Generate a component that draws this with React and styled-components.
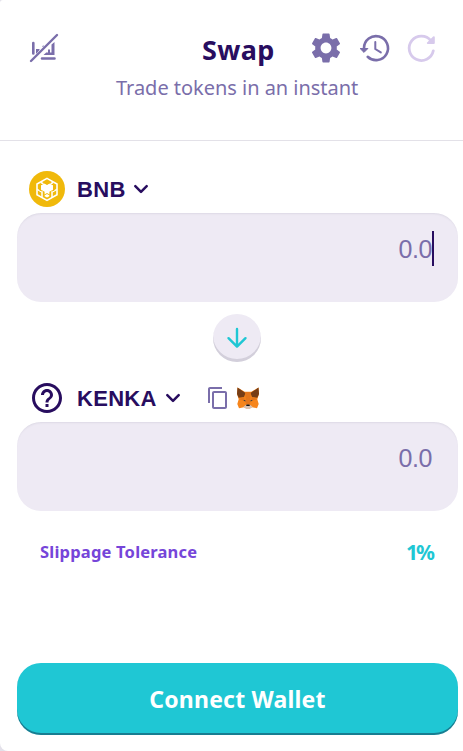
import { MdContentCopy, MdHelpOutline, MdSettings } from 'react-icons/md';
import styled, { createGlobalStyle } from 'styled-components';

const GlobalStyle = createGlobalStyle`
  * {
    box-sizing: border-box;
  }
  body {
    margin: 0;
    background: #e3e1ea;
    font-family: 'Noto Sans', sans-serif;
  }
  svg {
    display: block;
    flex-shrink: 0;
  }
`;

const Card = styled.main`
  width: 463px;
  height: 751px;
  background: #fff;
  border-radius: 3px 0 0 8px;
  overflow: hidden;
`;

const Header = styled.header`
  height: 141px;
  padding: 28px 25px 0 27px;
  border-bottom: 1px solid #e3e1e8;
`;

const TitleRow = styled.div`
  display: grid;
  grid-template-columns: 175px 1fr auto;
  align-items: center;
  height: 40px;
`;

const Title = styled.h2`
  margin: 4px 0 0;
  color: #280d5f;
  font-size: 27px;
  font-weight: 700;
  line-height: 36px;
  letter-spacing: 0.4px;
`;

const Actions = styled.div`
  display: flex;
  align-items: center;
  gap: 15px;
  color: #7a6eaa;
`;

const Subtitle = styled.p`
  margin: 7px 0 0 89px;
  color: #7a6eaa;
  font-size: 20px;
  line-height: 26px;
  letter-spacing: -0.03px;
  white-space: nowrap;
`;

const Body = styled.div`
  display: flex;
  flex-direction: column;
  padding: 24px 5px 0 17px;
`;

const TokenRow = styled.div`
  display: flex;
  align-items: center;
  height: 48px;
  padding-left: 12px;
  color: #280d5f;
`;

const TokenName = styled.span`
  width: ${({ $width }) => $width}px;
  margin: 1px 7px 0 12px;
  font-family: 'Liberation Sans', sans-serif;
  font-size: 22px;
  font-weight: 700;
  line-height: 28px;
  letter-spacing: 0.3px;
  white-space: nowrap;
`;

const TokenLinks = styled.div`
  display: flex;
  align-items: center;
  gap: 6px;
  margin-left: 24px;
  color: #7a6eaa;
`;

const AmountBox = styled.div`
  display: flex;
  justify-content: flex-end;
  align-items: flex-start;
  height: 89px;
  padding: 18px 24px 0;
  border-radius: 24px;
  background: #eeeaf4;
  box-shadow: inset 0 2px 2px -1px rgba(74, 74, 104, 0.1);
`;

const Amount = styled.span`
  height: 35px;
  color: #7a6eaa;
  font-family: 'Liberation Sans', sans-serif;
  font-size: 25px;
  line-height: 37px;
  letter-spacing: -0.4px;
  border-right: 2px solid ${({ $focused }) => ($focused ? '#280d5f' : 'transparent')};
`;

const SwitchButton = styled.button`
  display: flex;
  align-items: center;
  justify-content: center;
  align-self: center;
  width: 48px;
  height: 48px;
  margin: 12px 1px 12px 0;
  padding: 0;
  border: 0;
  border-radius: 50%;
  color: #1fc7d4;
  background: #eeeaf4;
  box-shadow: inset 0 -3px 0 rgba(14, 14, 44, 0.12);
`;

const SlippageRow = styled.div`
  display: flex;
  align-items: center;
  justify-content: space-between;
  height: 36px;
  margin-top: 23px;
  padding: 0 24px 0 23px;
  font-weight: 700;
`;

const SlippageLabel = styled.span`
  margin-bottom: 1px;
  color: #7645d9;
  font-size: 16.5px;
  letter-spacing: 0.2px;
`;

const SlippageValue = styled.span`
  margin-right: 1px;
  color: #1fc7d4;
  font-size: 21px;
  letter-spacing: -2px;
`;

const ConnectButton = styled.button`
  height: 72px;
  margin-top: 93px;
  padding: 0;
  border: 0;
  border-radius: 24px;
  color: #fff;
  background: #1fc7d4;
  box-shadow: inset 0 -2px 0 rgba(14, 14, 44, 0.4);
  font-family: 'Noto Sans', sans-serif;
  font-size: 23px;
  font-weight: 700;
  letter-spacing: 0.2px;
`;

const ChartOffIcon = () => (
  <svg width="34" height="34" viewBox="0 1.5 34 34">
    <path
      d="M6.3 13.5v10.5M15 29h12.5"
      fill="none"
      stroke="#7a6eaa"
      strokeWidth="2.6"
      strokeLinecap="round"
    />
    <path d="M9 19.5h3.5v1L9.5 24H9zM15 17l1.5-1.5v2zM16.5 25.5l3-2.8v.3h1.5v-3h2V23h1.5v-8l3-2.5v13z" fill="#7a6eaa" />
    <path d="M4 31.5 30 5.5" fill="none" stroke="#7a6eaa" strokeWidth="2.4" strokeLinecap="round" />
  </svg>
);

const HistoryIcon = () => (
  <svg width="32" height="32" viewBox="0.7 0 32 32" fill="none" stroke="currentColor">
    <path d="M5.7 17V16a12 12 0 1 1 3.7 8.8" strokeWidth="2.6" strokeLinecap="round" />
    <path d="M1.8 16.5h7.8l-3.9 3.9z" fill="currentColor" strokeWidth="1" strokeLinejoin="round" />
    <path d="M17 10v7l5.5 3.4" strokeWidth="2" strokeLinecap="round" />
  </svg>
);

const RefreshIcon = () => (
  <svg width="32" height="32" viewBox="0 0 32 32" fill="none" stroke="#d7caec" strokeLinecap="round" strokeLinejoin="round">
    <path d="M27.3 18.8A12.2 12.2 0 1 1 25 8.8" strokeWidth="2.8" />
    <path d="M27.8 5.2v5.9h-6z" fill="#d7caec" strokeWidth="2" />
  </svg>
);

const BnbIcon = () => (
  <svg width="36" height="36" viewBox="0 0 36 36" fill="none">
    <circle cx="18" cy="18" r="18" fill="#f0b90b" />
    <path d="M18 7.4 28 13v10.8L18 29.4 8 23.8V13z" stroke="#fff" strokeWidth="1.6" />
    <path d="m12 11.5 6 3.3 6-3.3M8.3 18.4l4.7 2.6v5.4M27.7 18.4 23 21v5.4" stroke="#fff" strokeWidth="1.5" />
    <path d="m12 14.3 3-1.4 3 1.6 3-1.6 3 1.4v4.4l-3.6 2.1v4.4L18 26.6l-2.4-1.4v-4.4L12 18.7z" fill="#fff" />
    <path
      d="m14.5 12.3 3.5-1.8 3.5 1.8M10.3 14.5v4.3l2.2 1.3M25.7 14.5v4.3l-2.2 1.3M14.5 22v2.5l3.5-2 3.5 2V22"
      stroke="#f0b90b"
      strokeWidth="1"
    />
  </svg>
);

const ChevronIcon = () => (
  <svg width="18" height="18" viewBox="0 0 18 18" fill="none" stroke="currentColor">
    <path d="m3.3 6.2 5.7 5.7 5.7-5.7" strokeWidth="2.5" strokeLinecap="round" strokeLinejoin="round" />
  </svg>
);

const ArrowDownIcon = () => (
  <svg width="24" height="24" viewBox="0 0 24 24" fill="none" stroke="currentColor">
    <path d="M12 3v17.5M3.5 12.2l8.5 8.5 8.5-8.5" strokeWidth="2.4" strokeLinecap="round" strokeLinejoin="round" />
  </svg>
);

const FoxIcon = () => (
  <svg width="24" height="24" viewBox="0 0 24 24">
    <path d="m1.5 1.5 7.2 4.3h6.6l7.2-4.3L23 8l-1.7 5.2 1.4 4.7-1.7 4.3-5-1-2.2 1.3h-3.6L8 21.2l-5 1-1.7-4.3 1.4-4.7L1 8z" fill="#f6851b" />
    <path d="m1.5 1.5 8 5.6L8 11l-5.3.8L1 8zM22.5 1.5l-8 5.6L16 11l5.3.8L23 8z" fill="#763d16" />
    <path d="m9.2 6 .7 12h4.2l.7-12zM2.7 13.2 8 11l1.3 4.3zM21.3 13.2 16 11l-1.3 4.3z" fill="#e4761b" />
    <path d="m7.2 14.4 2-.5.3 1.5zM16.8 14.4l-2-.5-.3 1.5z" fill="#233447" />
    <path d="m7.5 20.5 2.8-1.7h3.4l2.8 1.7-2.5 2.3h-4z" fill="#d7c1b3" />
    <path d="M10.5 18.5h3l.3 1.4h-3.6z" fill="#161616" />
  </svg>
);

export default function App() {
  return (
    <>
      <GlobalStyle />
      <Card>
        <Header>
          <TitleRow>
            <ChartOffIcon />
            <Title>Swap</Title>
            <Actions>
              <MdSettings size={36} />
              <HistoryIcon />
              <RefreshIcon />
            </Actions>
          </TitleRow>
          <Subtitle>Trade tokens in an instant</Subtitle>
        </Header>
        <Body>
          <TokenRow>
            <BnbIcon />
            <TokenName $width={48}>BNB</TokenName>
            <ChevronIcon />
          </TokenRow>
          <AmountBox>
            <Amount $focused>0.0</Amount>
          </AmountBox>
          <SwitchButton aria-label="Switch tokens">
            <ArrowDownIcon />
          </SwitchButton>
          <TokenRow>
            <MdHelpOutline size={36} />
            <TokenName $width={80}>KENKA</TokenName>
            <ChevronIcon />
            <TokenLinks>
              <MdContentCopy size={24} />
              <FoxIcon />
            </TokenLinks>
          </TokenRow>
          <AmountBox>
            <Amount>0.0</Amount>
          </AmountBox>
          <SlippageRow>
            <SlippageLabel>Slippage Tolerance</SlippageLabel>
            <SlippageValue>1%</SlippageValue>
          </SlippageRow>
          <ConnectButton>Connect Wallet</ConnectButton>
        </Body>
      </Card>
    </>
  );
}
